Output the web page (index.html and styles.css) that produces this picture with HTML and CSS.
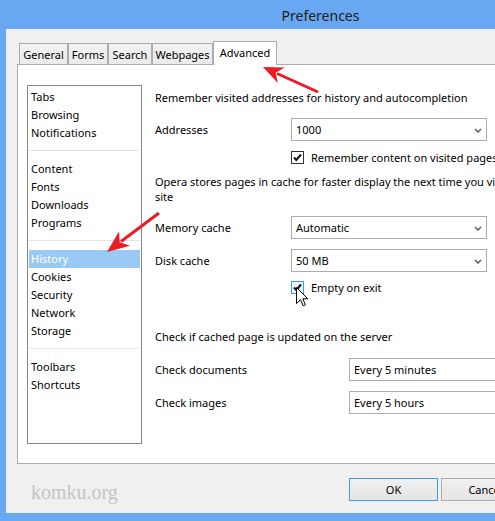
FILE: index.html
```html
<!DOCTYPE html>
<html>
<head>
<meta charset="utf-8">
<title>Preferences</title>
<link rel="stylesheet" href="styles.css">
</head>
<body>
<div class="window">
  <div class="titlebar">Preferences</div>
  <div class="client">
    <div class="tabs">
      <div class="tab tab-general">General</div>
      <div class="tab tab-forms">Forms</div>
      <div class="tab tab-search">Search</div>
      <div class="tab tab-webpages">Webpages</div>
      <div class="tab tab-advanced active">Advanced</div>
    </div>
    <div class="panel">
      <ul class="sidebar">
        <li class="item">Tabs</li>
        <li class="item">Browsing</li>
        <li class="item">Notifications</li>
        <li class="sep"></li>
        <li class="item">Content</li>
        <li class="item">Fonts</li>
        <li class="item">Downloads</li>
        <li class="item">Programs</li>
        <li class="sep"></li>
        <li class="item selected">History</li>
        <li class="item">Cookies</li>
        <li class="item">Security</li>
        <li class="item">Network</li>
        <li class="item">Storage</li>
        <li class="sep"></li>
        <li class="item">Toolbars</li>
        <li class="item">Shortcuts</li>
      </ul>
      <div class="content">
        <p class="text">Remember visited addresses for history and autocompletion</p>
        <div class="field r-addr">
          <span class="label">Addresses</span>
          <div class="select">1000<svg class="chev" width="8" height="5" viewBox="0 0 8 5"><path d="M1 1 L4 4 L7 1" fill="none" stroke="#555" stroke-width="1.4"/></svg></div>
        </div>
        <div class="check r-check1">
          <span class="box"><svg width="11" height="11" viewBox="0 0 11 11"><path d="M2 5.5 L4.3 8 L9 2.5" fill="none" stroke="#111" stroke-width="2"/></svg></span>
          <span class="check-label">Remember content on visited pages</span>
        </div>
        <p class="para r-para">Opera stores pages in cache for faster display the next time you visit a<br>site</p>
        <div class="field r-mem">
          <span class="label">Memory cache</span>
          <div class="select">Automatic<svg class="chev" width="8" height="5" viewBox="0 0 8 5"><path d="M1 1 L4 4 L7 1" fill="none" stroke="#555" stroke-width="1.4"/></svg></div>
        </div>
        <div class="field r-disk">
          <span class="label">Disk cache</span>
          <div class="select">50 MB<svg class="chev" width="8" height="5" viewBox="0 0 8 5"><path d="M1 1 L4 4 L7 1" fill="none" stroke="#555" stroke-width="1.4"/></svg></div>
        </div>
        <div class="check r-check2">
          <span class="box hover"><svg width="11" height="11" viewBox="0 0 11 11"><path d="M2 5.5 L4.3 8 L9 2.5" fill="none" stroke="#111" stroke-width="2"/></svg></span>
          <span class="check-label">Empty on exit</span>
        </div>
        <p class="text r-p3">Check if cached page is updated on the server</p>
        <div class="field r-docs">
          <span class="label wide">Check documents</span>
          <div class="select combo">Every 5 minutes</div>
        </div>
        <div class="field r-img">
          <span class="label wide">Check images</span>
          <div class="select combo">Every 5 hours</div>
        </div>
      </div>
    </div>
    <div class="footer">
      <span class="watermark">komku.org</span>
      <div class="buttons">
        <button class="btn default">OK</button>
        <button class="btn">Cancel</button>
      </div>
    </div>
  </div>
</div>
<svg class="annot" width="495" height="521" viewBox="0 0 495 521">
  <line x1="318" y1="92" x2="277" y2="73.5" stroke="#ec1c24" stroke-width="3"/>
  <polygon points="263,67 284.7,67.6 275.7,72.8 277.7,83" fill="#ec1c24"/>
  <line x1="159" y1="213" x2="121" y2="241.5" stroke="#ec1c24" stroke-width="3"/>
  <polygon points="107,252 119,231.5 119.7,242.3 130,245.7" fill="#ec1c24"/>
</svg>
<svg class="cursor" width="13" height="20" viewBox="0 0 13 20">
  <path d="M0.5 0.5 L0.5 16.5 L4.5 12.7 L7.2 18.8 L9.4 17.8 L6.8 11.8 L11.8 11.8 Z" fill="#fff" stroke="#000" stroke-width="1"/>
</svg>
</body>
</html>
```
FILE: styles.css
```css
* { box-sizing: border-box; }
html, body { margin: 0; padding: 0; }
body {
  width: 495px;
  height: 521px;
  overflow: hidden;
  position: relative;
  background: #68a8f2;
  font-family: "Noto Sans", "Open Sans", sans-serif;
  font-size: 11px;
  color: #000;
}
.window {
  width: 641px;
  height: 521px;
  display: flex;
  flex-direction: column;
}
.titlebar {
  height: 29px;
  display: flex;
  align-items: center;
  justify-content: center;
  font-size: 14px;
  color: #202020;
  padding-top: 1px;
}
.client {
  margin: 0 6px;
  height: 484px;
  background: #f0f0f0;
  padding: 12px 11px 0;
  display: flex;
  flex-direction: column;
}
.tabs {
  display: flex;
  align-items: flex-end;
  height: 23px;
  margin-left: 2px;
}
.tab {
  height: 21px;
  border: 1px solid #acacac;
  border-bottom: none;
  background: linear-gradient(#f2f2f2, #ebebeb);
  display: flex;
  align-items: center;
  justify-content: center;
}
.tab-general { width: 49px; }
.tab-forms { width: 40px; }
.tab-search { width: 44px; }
.tab-webpages { width: 61px; }
.tab-advanced { width: 64px; }
.tab.active {
  height: 24px;
  margin-bottom: -1px;
  background: #fff;
  position: relative;
  z-index: 1;
  padding-bottom: 2px;
}
.panel {
  height: 400px;
  background: #fff;
  border: 1px solid #acacac;
  display: flex;
  align-items: flex-start;
}
.sidebar {
  list-style: none;
  margin: 20px 0 0 9px;
  padding: 2px 0 0;
  width: 115px;
  height: 359px;
  border: 1px solid #828790;
  flex: none;
}
.item {
  height: 18px;
  line-height: 18px;
  margin: 0 1px;
  padding-left: 2px;
}
.item.selected {
  background: #99c9f5;
  color: #fff;
}
.sep {
  height: 18px;
  margin: 0 1px;
  position: relative;
}
.sep::before {
  content: "";
  position: absolute;
  left: 0;
  right: 1px;
  top: 8px;
  height: 1px;
  background: #e3e3e3;
}
.content {
  margin-left: 13px;
  padding-top: 24px;
  display: flex;
  flex-direction: column;
  flex: 1;
}
.text {
  margin: 0;
  height: 18px;
  line-height: 18px;
  white-space: nowrap;
}
.para {
  margin: 0;
  line-height: 15px;
  white-space: nowrap;
}
.field {
  height: 23px;
  display: flex;
  align-items: center;
}
.label {
  width: 136px;
  flex: none;
}
.label.wide { width: 194px; }
.select {
  width: 196px;
  height: 23px;
  border: 1px solid #acacac;
  background: #fff;
  padding-left: 4px;
  display: flex;
  align-items: center;
  justify-content: space-between;
  padding-right: 4px;
  flex: none;
}
.chev { display: block; margin-top: 1px; }
.check {
  height: 14px;
  display: flex;
  align-items: center;
  margin-left: 136px;
  white-space: nowrap;
}
.box {
  width: 13px;
  height: 13px;
  border: 1px solid #333;
  background: #fff;
  display: flex;
  align-items: center;
  justify-content: center;
  margin-right: 7px;
  flex: none;
}
.box.hover {
  border-color: #3c9cf5;
  background: #eaf4fd;
}
.r-addr { margin-top: 11px; }
.r-check1 { margin-top: 9px; }
.r-para { margin-top: 10px; }
.r-mem { margin-top: 12px; }
.r-disk { margin-top: 10px; }
.r-check2 { margin-top: 8px; }
.r-p3 { margin-top: 34px; }
.r-docs { margin-top: 12px; }
.r-img { margin-top: 10px; }
.footer {
  display: grid;
  grid-template-columns: 332px auto;
  height: 49px;
}
.watermark {
  font-family: "Liberation Serif", serif;
  font-size: 20px;
  line-height: 20px;
  color: #c4c4c4;
  padding-left: 14px;
  margin-top: 18px;
}
.buttons {
  display: flex;
  gap: 3px;
  margin-top: 14px;
  align-items: flex-start;
}
.btn {
  width: 89px;
  height: 23px;
  border: 1px solid #acacac;
  background: linear-gradient(#f0f0f0, #e5e5e5);
  font-family: "Noto Sans", "Open Sans", sans-serif;
  font-size: 11px;
  color: #000;
  padding: 0;
}
.btn.default { border-color: #3c9cf5; }
.annot {
  position: absolute;
  left: 0;
  top: 0;
  pointer-events: none;
}
.cursor {
  position: absolute;
  left: 296px;
  top: 287px;
  pointer-events: none;
}
```
